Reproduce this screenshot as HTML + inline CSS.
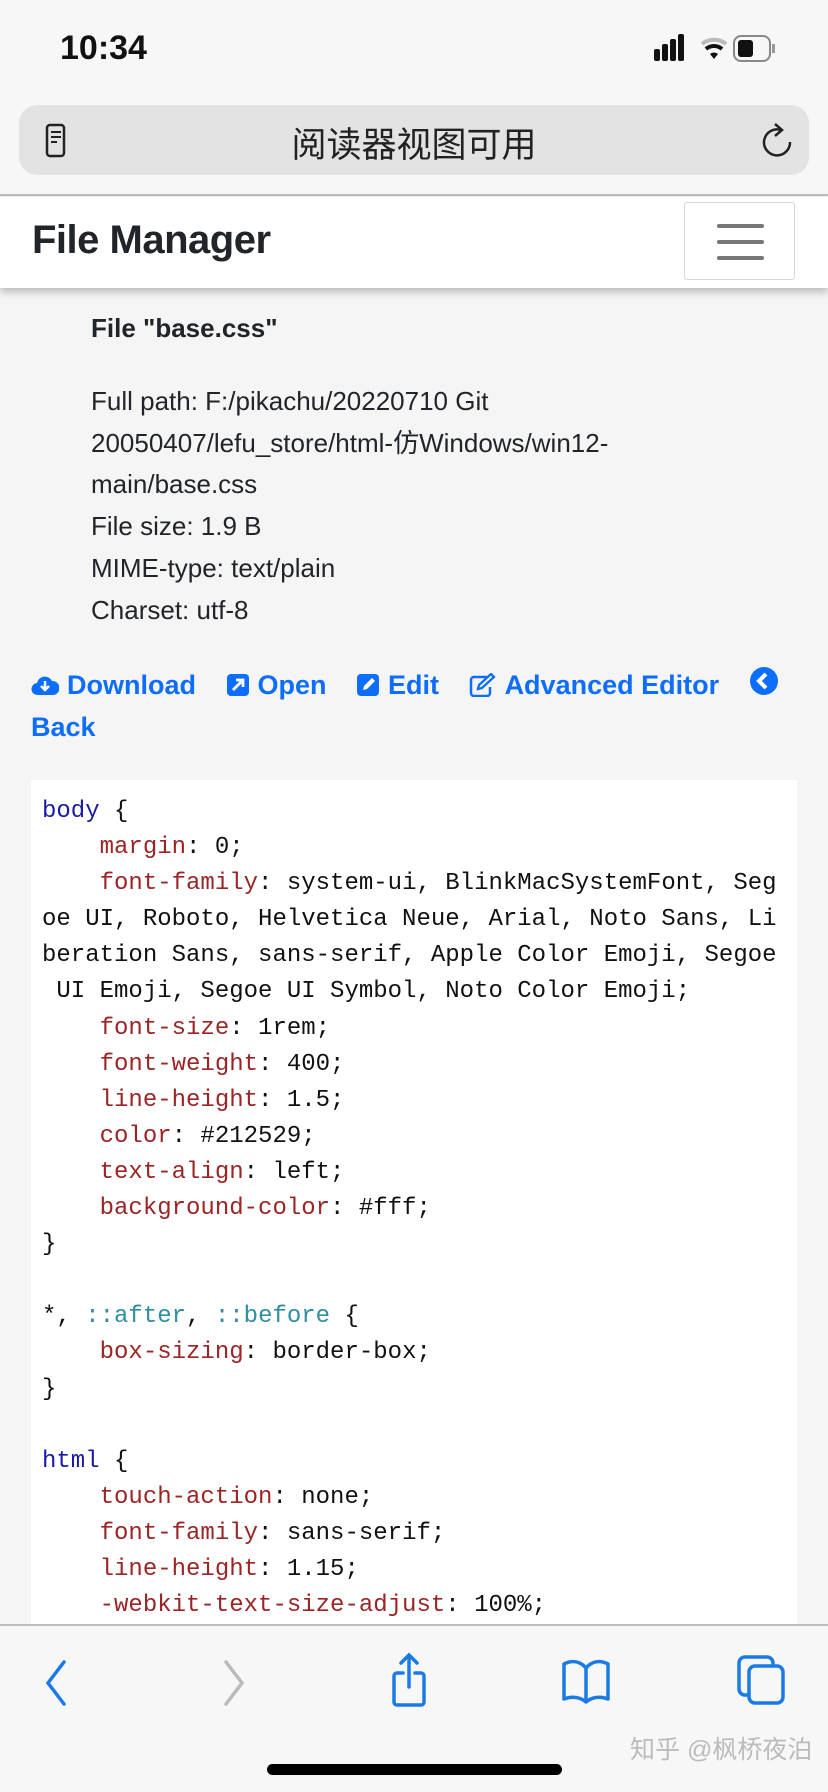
<!DOCTYPE html>
<html><head><meta charset="utf-8"><style>
*{box-sizing:border-box;margin:0;padding:0}
html,body{width:828px;height:1792px;overflow:hidden;background:#f5f5f5;font-family:"Liberation Sans","Noto Sans CJK SC",sans-serif;position:relative}
.top{position:absolute;left:0;top:0;width:828px;height:196px;background:#f7f7f7;border-bottom:2px solid #bdbdbd}
.time{position:absolute;left:60px;top:29px;font-size:34px;font-weight:bold;color:#111}
.url{position:absolute;left:19px;top:105px;width:790px;height:70px;background:#e3e3e3;border-radius:18px}
.url .t{position:absolute;left:0;right:0;top:12px;text-align:center;font-size:35px;color:#222}
.hdr{position:absolute;left:0;top:197px;width:828px;height:91px;background:#fff;box-shadow:0 4px 8px rgba(0,0,0,.25)}
.hdr .brand{position:absolute;left:32px;top:21px;font-size:40px;font-weight:bold;color:#212529;letter-spacing:-0.5px}
.burger{position:absolute;left:684px;top:5px;width:111px;height:78px;border:1px solid #d8d8d8;border-radius:3px}
.burger i{position:absolute;left:32px;width:47px;height:4px;background:#777;border-radius:2px}
.info{position:absolute;left:91px;top:308px;font-size:26px;color:#212529;line-height:41.8px}
.links{position:absolute;left:31px;top:664px;width:780px;font-size:27px;font-weight:bold;color:#0d6efd;line-height:42px}
.links span{margin-right:22px;white-space:nowrap}
.links svg{vertical-align:-3px;margin-right:8px}
.code{position:absolute;left:31px;top:780px;width:766px;height:900px;background:#fff;padding:14px 0 0 11px;font-family:"Liberation Mono",monospace;font-size:24px;line-height:36.1px;color:#111;white-space:pre}
.s{color:#1a1aa6}.p{color:#9c2424}.q{color:#2e8fa3}
.bar{position:absolute;left:0;top:1624px;width:828px;height:168px;background:#f7f7f7;border-top:2px solid #bdbdbd}
.home{position:absolute;left:267px;top:1764px;width:295px;height:11px;border-radius:6px;background:#000}
.wm{position:absolute;left:630px;top:1730px;font-size:25px;color:#bbb}
</style></head><body>
<div class="top">
<div class="time">10:34</div>
<svg style="position:absolute;left:652px;top:32px" width="140" height="34" viewBox="0 0 140 34">
<rect x="2" y="17" width="6" height="12" rx="2" fill="#111"/><rect x="10" y="12" width="6" height="17" rx="2" fill="#111"/><rect x="18" y="7" width="6" height="22" rx="2" fill="#111"/><rect x="26" y="2" width="6" height="27" rx="2" fill="#111"/>
<path d="M50 12a19 19 0 0 1 24 0" stroke="#bbb" stroke-width="4" fill="none"/><path d="M54 17a12 12 0 0 1 16 0" stroke="#111" stroke-width="4" fill="none"/><path d="M58 22l4 5 4-5a6 6 0 0 0-8 0z" fill="#111"/>
<rect x="82" y="4" width="36" height="25" rx="7" fill="none" stroke="#888" stroke-width="2"/><rect x="86" y="8" width="15" height="17" rx="3" fill="#111"/><rect x="120" y="12" width="3" height="9" fill="#999"/>
</svg>
<div class="url">
<svg style="position:absolute;left:26px;top:18px" width="22" height="36" viewBox="0 0 22 36"><rect x="2" y="2" width="17" height="31" rx="3" fill="none" stroke="#222" stroke-width="2.5"/><path d="M6 9h10M6 14h10M6 19h6" stroke="#222" stroke-width="2"/></svg>
<div class="t">阅读器视图可用</div>
<svg style="position:absolute;left:742px;top:18px" width="34" height="38" viewBox="0 0 34 38"><path d="M20 7A13 13 0 1 0 29 19" fill="none" stroke="#222" stroke-width="2.5"/><path d="M14 1l7 6-7 6" fill="none" stroke="#222" stroke-width="2.5"/></svg>
</div>
</div>
<div class="hdr"><div class="brand">File Manager</div><div class="burger"><i style="top:21px"></i><i style="top:37px"></i><i style="top:53px"></i></div></div>
<div class="info"><b>File "base.css"</b><br><div style="height:31px"></div>Full path: F:/pikachu/20220710 Git<br>20050407/lefu_store/html-仿Windows/win12-<br>main/base.css<br>File size: 1.9 B<br>MIME-type: text/plain<br>Charset: utf-8</div>
<div class="links"><span><svg width="28" height="24" viewBox="0 0 28 24"><path d="M7 22a6 6 0 0 1-1-12 8 8 0 0 1 15-2 6 6 0 0 1 1 14z" fill="#0d6efd"/><path d="M14 8v8M10 13l4 4 4-4" stroke="#fff" stroke-width="2.5" fill="none"/></svg>Download</span> <span><svg width="24" height="24" viewBox="0 0 24 24"><rect x="1" y="1" width="22" height="22" rx="4" fill="#0d6efd"/><path d="M7 17L16 8M10 7h7v7" stroke="#fff" stroke-width="2.8" fill="none"/></svg>Open</span> <span><svg width="24" height="24" viewBox="0 0 24 24"><rect x="1" y="1" width="22" height="22" rx="4" fill="#0d6efd"/><path d="M7 17l1-4 8-8 3 3-8 8z" fill="#fff"/></svg>Edit</span> <span><svg width="28" height="24" viewBox="0 0 28 24"><path d="M18 4H5a3 3 0 0 0-3 3v13a3 3 0 0 0 3 3h13a3 3 0 0 0 3-3v-6" fill="none" stroke="#0d6efd" stroke-width="2.5"/><path d="M9 16l1-4 12-11 3 3-12 11z" fill="none" stroke="#0d6efd" stroke-width="2.3"/></svg>Advanced Editor</span> <span><svg width="30" height="30" viewBox="0 0 30 30" style="vertical-align:-2px"><circle cx="15" cy="15" r="14" fill="#0d6efd"/><path d="M17 8l-7 7 7 7" stroke="#fff" stroke-width="4" fill="none"/></svg></span><br>Back</div>
<div class="code"><span class="s">body</span> {
    <span class="p">margin</span>: 0;
    <span class="p">font-family</span>: system-ui, BlinkMacSystemFont, Seg
oe UI, Roboto, Helvetica Neue, Arial, Noto Sans, Li
beration Sans, sans-serif, Apple Color Emoji, Segoe
 UI Emoji, Segoe UI Symbol, Noto Color Emoji;
    <span class="p">font-size</span>: 1rem;
    <span class="p">font-weight</span>: 400;
    <span class="p">line-height</span>: 1.5;
    <span class="p">color</span>: #212529;
    <span class="p">text-align</span>: left;
    <span class="p">background-color</span>: #fff;
}

*, <span class="q">::after</span>, <span class="q">::before</span> {
    <span class="p">box-sizing</span>: border-box;
}

<span class="s">html</span> {
    <span class="p">touch-action</span>: none;
    <span class="p">font-family</span>: sans-serif;
    <span class="p">line-height</span>: 1.15;
    <span class="p">-webkit-text-size-adjust</span>: 100%;
</div>
<div class="bar">
<svg style="position:absolute;left:40px;top:30px" width="30" height="50" viewBox="0 0 30 50"><path d="M24 6L8 27l16 21" fill="none" stroke="#1a7ae6" stroke-width="3.5" stroke-linecap="round"/></svg>
<svg style="position:absolute;left:220px;top:30px" width="30" height="50" viewBox="0 0 30 50"><path d="M6 6l16 21L6 48" fill="none" stroke="#bbb" stroke-width="3.5" stroke-linecap="round"/></svg>
<svg style="position:absolute;left:388px;top:26px" width="46" height="56" viewBox="0 0 46 56"><path d="M15 21H9a3 3 0 0 0-3 3v26a3 3 0 0 0 3 3h24a3 3 0 0 0 3-3V24a3 3 0 0 0-3-3h-6M21 3v32M13 11l8-8 8 8" fill="none" stroke="#1a7ae6" stroke-width="3.5" stroke-linecap="round"/></svg>
<svg style="position:absolute;left:560px;top:32px" width="52" height="48" viewBox="0 0 52 48"><path d="M4 6c8-4 16-3 22 4v34c-6-5-14-6-22-3zM48 6c-8-4-16-3-22 4v34c6-5 14-6 22-3z" fill="none" stroke="#1a7ae6" stroke-width="3.5" stroke-linejoin="round"/></svg>
<svg style="position:absolute;left:735px;top:28px" width="52" height="52" viewBox="0 0 52 52"><rect x="4" y="3" width="34" height="38" rx="6" fill="none" stroke="#1a7ae6" stroke-width="3.5"/><rect x="14" y="12" width="34" height="37" rx="6" fill="#f7f7f7" stroke="#1a7ae6" stroke-width="3.5"/></svg>
</div>
<div class="wm">知乎 @枫桥夜泊</div>
<div class="home"></div>
</body></html>
